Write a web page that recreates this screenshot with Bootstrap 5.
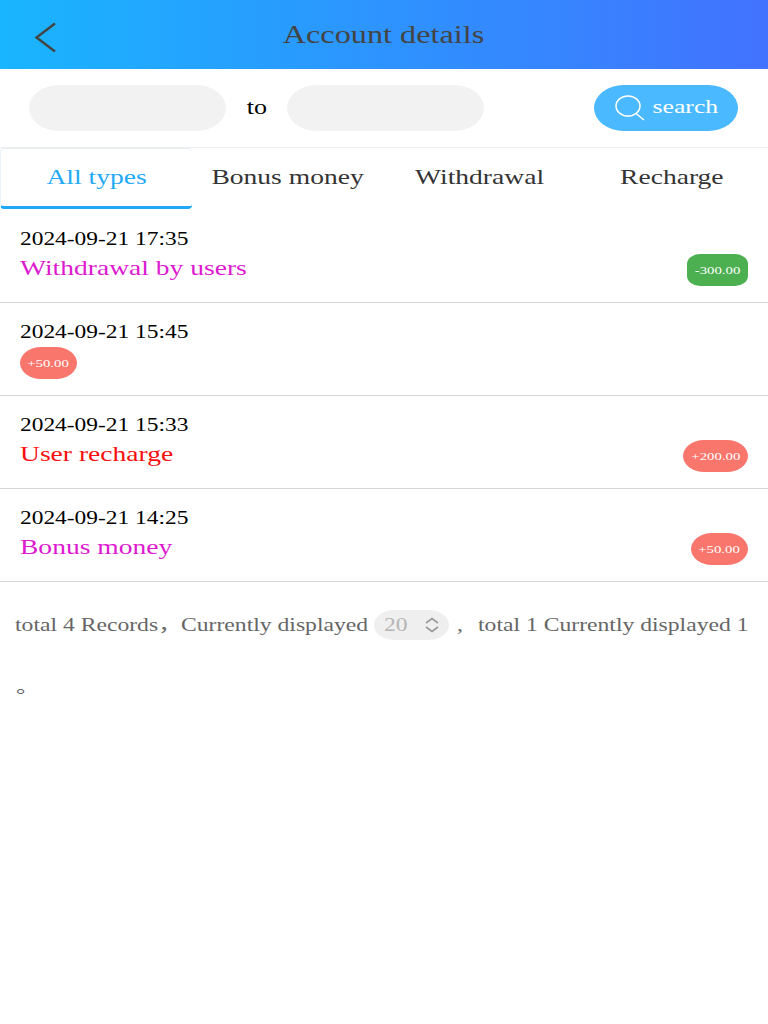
<!DOCTYPE html>
<html lang="en"><head><meta charset="utf-8"><title>Account details</title>
<link href="https://cdn.jsdelivr.net/npm/bootstrap@5.3.0/dist/css/bootstrap.min.css" rel="stylesheet">
<style>
body{font-family:"Liberation Serif","Times New Roman","Noto Sans CJK SC",serif;background:#fff;color:#333;margin:0}
.wide{display:inline-block;transform:scaleX(1.3);transform-origin:center;white-space:nowrap}
.wide-l{transform-origin:left center}
.top-bar{height:69px;background:linear-gradient(90deg,#19b5fe,#4272ff);padding-left:33px}
.top-title{font-size:24.8px;line-height:30px;color:#444;left:-1px;right:0;top:19.500px;text-align:center}
.back-ico{width:25px;height:36px;display:block}
.filter-row{height:78px;padding:16px 30px 16px 29px}
.date-box{width:197px;height:46px;border-radius:30px/23px;background:#f2f2f2;border:0}
.to-word{width:61px;text-align:center;font-size:20px;color:#000;line-height:44px;height:46px}
.find-btn{width:144px;height:46px;border-radius:30px/23px;background:#4ab9ff;color:#fff;font-size:19.8px;border:0;padding:0 0 2px 21px}
.find-btn svg{width:30px;height:26px;margin:2px 15px 0 0;flex:none}
.find-btn .wide{width:50px;text-align:center}
.tab-row{height:63px;border-top:1px solid #eee}
.tab-cell{width:25%;font-size:21.2px;line-height:58px;text-align:center;color:#333}
.tab-cell.on{color:#1fa9f7;border:1px solid #e8f3fb;border-bottom:3px solid #1fa9f7;border-radius:4px;border-right:0;border-top-color:#e6eef4;line-height:56px;height:61px}
.rec-row{height:93px;border-bottom:1px solid #d6d6d6;padding:17px 20px 0}
.rec-date{font-size:18px;line-height:24px;color:#000}
.rec-note{font-size:21.2px;line-height:26px;margin-top:4px}
.amt{height:32px;line-height:32px;font-size:11.4px;color:#fff;text-align:center;border-radius:21px/16px;background:#f9766d;margin-top:3px}
.amt.down{background:#4caf50;border-radius:13px/10px;width:61px}
.a200{width:65px}.a50{width:57px}
.rec-note-pink{color:#dd19d0}.rec-note-red{color:#f70e0e}
.foot-line{padding:28px 0 0 15px;font-size:18.2px;color:#666;height:60px;line-height:30px}
.foot-a{width:166px}.foot-b{width:193px}.foot-c{width:21px}
.page-pick{width:75px;height:30px;border-radius:20px/15px;background:#efefef;color:#b5b5b5;padding-left:10px}
.page-pick svg{width:16px;height:16px;margin-right:9px}
.foot-dot{padding-left:16px;font-size:18.2px;color:#666;line-height:30px;margin-top:30px}
</style></head>
<body>
<header class="top-bar position-relative d-flex align-items-center">
  <svg class="back-ico" viewBox="0 0 25 36" fill="none" stroke="#444" stroke-width="2.4"><path d="M22 6.500 3.500 20.500 22 34.500"/></svg>
  <div class="top-title position-absolute"><span class="wide">Account details</span></div>
</header>
<section class="filter-row d-flex align-items-center">
  <input class="date-box" type="text" aria-label="from">
  <span class="to-word"><span class="wide">to</span></span>
  <input class="date-box" type="text" aria-label="to">
  <button class="find-btn ms-auto d-flex align-items-center" type="button">
    <svg viewBox="0 0 30 26" fill="none" stroke="#fff" stroke-width="1.5"><ellipse cx="13" cy="11" rx="12" ry="10"/><path d="m21 18.500 8 6.500"/></svg>
    <span class="wide">search</span>
  </button>
</section>
<nav class="tab-row d-flex">
  <div class="tab-cell on"><span class="wide">All types</span></div>
  <div class="tab-cell"><span class="wide">Bonus money</span></div>
  <div class="tab-cell"><span class="wide">Withdrawal</span></div>
  <div class="tab-cell"><span class="wide">Recharge</span></div>
</nav>
<div class="rec-row">
  <div class="rec-date"><span class="wide wide-l">2024-09-21 17:35</span></div>
  <div class="d-flex justify-content-between align-items-start"><div class="rec-note rec-note-pink"><span class="wide wide-l">Withdrawal by users</span></div><div class="amt down"><span class="wide">-300.00</span></div></div>
</div>
<div class="rec-row">
  <div class="rec-date"><span class="wide wide-l">2024-09-21 15:45</span></div>
  <div class="amt a50"><span class="wide">+50.00</span></div>
</div>
<div class="rec-row">
  <div class="rec-date"><span class="wide wide-l">2024-09-21 15:33</span></div>
  <div class="d-flex justify-content-between align-items-start"><div class="rec-note rec-note-red"><span class="wide wide-l">User recharge</span></div><div class="amt a200"><span class="wide">+200.00</span></div></div>
</div>
<div class="rec-row">
  <div class="rec-date"><span class="wide wide-l">2024-09-21 14:25</span></div>
  <div class="d-flex justify-content-between align-items-start"><div class="rec-note rec-note-pink"><span class="wide wide-l">Bonus money</span></div><div class="amt a50"><span class="wide">+50.00</span></div></div>
</div>
<div class="foot-line d-flex">
  <span class="wide wide-l foot-a">total 4 Records，</span>
  <span class="wide wide-l foot-b">Currently displayed</span>
  <span class="page-pick d-flex align-items-center justify-content-between"><span class="wide wide-l">20</span><svg viewBox="0 0 16 16" fill="none" stroke="#999" stroke-width="1.6"><path d="m2 6 6-4.500L14 6M2 10l6 4.500 6-4.500"/></svg></span>
  <span class="wide wide-l foot-c ms-2">,</span>
  <span class="wide wide-l">total 1 Currently displayed 1</span>
</div>
<div class="foot-dot"><span class="wide wide-l">。</span></div>
<script src="https://cdn.jsdelivr.net/npm/bootstrap@5.3.0/dist/js/bootstrap.bundle.min.js"></script>
</body></html>
